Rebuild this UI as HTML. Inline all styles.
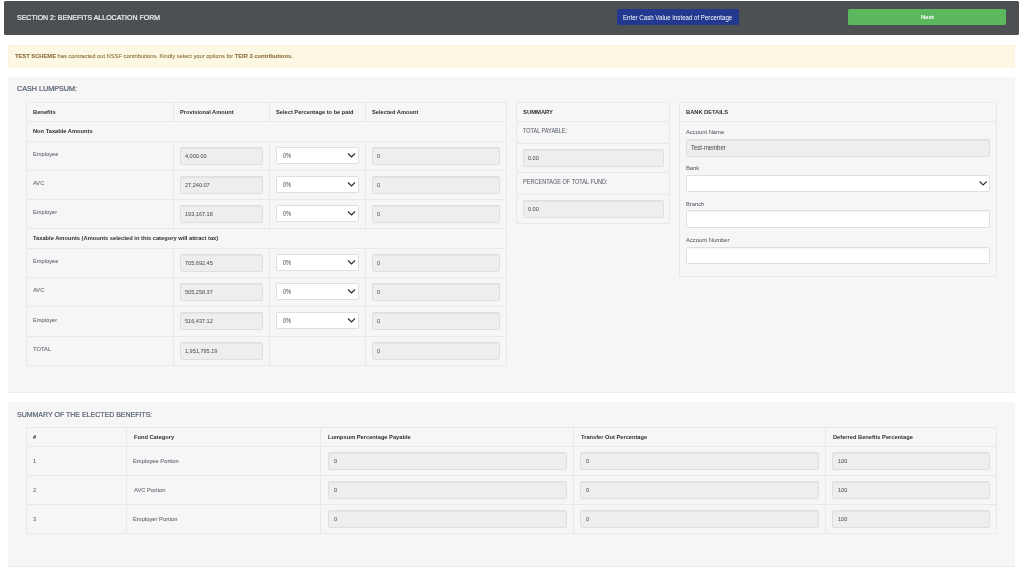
<!DOCTYPE html>
<html><head><meta charset="utf-8"><title>Benefits Allocation Form</title>
<style>
html,body{margin:0;padding:0;background:#fff;width:1024px;height:567px;overflow:hidden;}
#pg{position:absolute;left:0;top:0;width:1024px;height:567px;will-change:transform;font-family:"Liberation Sans",sans-serif;}
#pg div{position:absolute;}
.t{white-space:nowrap;line-height:10px;}
svg{display:block;}
</style></head><body><div id="pg">
<div style="left:4.00px;top:1.00px;width:1015.00px;height:34.00px;background:#4d5053;border-radius:1.5px;"></div>
<div class="t" style="left:16.82px;top:13.03px;font-size:8.0px;font-weight:normal;color:#f4f4f4;transform:scaleX(0.8756);transform-origin:0 0;-webkit-text-stroke:0.22px #f4f4f4;">SECTION 2: BENEFITS ALLOCATION FORM</div>
<div style="left:617.00px;top:9.20px;width:121.80px;height:16.10px;background:#22398f;border-radius:1.5px;"></div>
<div class="t" style="left:622.91px;top:12.85px;font-size:6.5px;font-weight:normal;color:#ffffff;transform:scaleX(0.9425);transform-origin:0 0;">Enter Cash Value Instead of Percentage</div>
<div style="left:848.40px;top:9.10px;width:157.60px;height:16.30px;background:#5cb85c;border-radius:1.5px;"></div>
<div class="t" style="left:920.54px;top:11.95px;font-size:6.2px;font-weight:bold;color:#ffffff;transform:scaleX(0.9733);transform-origin:0 0;">Next</div>
<div style="left:8.00px;top:45.00px;width:1007.00px;height:22.60px;background:#fcf8e3;border:1px solid #faf4de;box-sizing:border-box;border-radius:0.5px;"></div>
<div class="t" style="left:14.94px;top:51.15px;font-size:6.2px;font-weight:normal;color:#8a6d3b;transform:scaleX(0.9314);transform-origin:0 0;-webkit-text-stroke:0.08px #8a6d3b;"><b>TEST SCHEME</b> has contracted out NSSF contributions. Kindly select your options for <b>TEIR 3 contributions.</b></div>
<div style="left:8.00px;top:77.00px;width:1007.00px;height:315.50px;background:#f6f6f6;border-bottom:1px solid #ededed;box-sizing:border-box;"></div>
<div class="t" style="left:16.74px;top:84.20px;font-size:7.8px;font-weight:normal;color:#566070;transform:scaleX(0.9228);transform-origin:0 0;-webkit-text-stroke:0.22px #566070;">CASH LUMPSUM:</div>
<div style="left:26.00px;top:102.00px;width:481.00px;height:264.00px;border:1px solid #e9e9e9;box-sizing:border-box;"></div>
<div style="left:26.00px;top:121.00px;width:481.00px;height:1.00px;background:#e9e9e9;"></div>
<div style="left:26.00px;top:141.00px;width:481.00px;height:1.00px;background:#e9e9e9;"></div>
<div style="left:26.00px;top:170.00px;width:481.00px;height:1.00px;background:#e9e9e9;"></div>
<div style="left:26.00px;top:199.00px;width:481.00px;height:1.00px;background:#e9e9e9;"></div>
<div style="left:26.00px;top:228.00px;width:481.00px;height:1.00px;background:#e9e9e9;"></div>
<div style="left:26.00px;top:248.00px;width:481.00px;height:1.00px;background:#e9e9e9;"></div>
<div style="left:26.00px;top:277.00px;width:481.00px;height:1.00px;background:#e9e9e9;"></div>
<div style="left:26.00px;top:306.00px;width:481.00px;height:1.00px;background:#e9e9e9;"></div>
<div style="left:26.00px;top:336.00px;width:481.00px;height:1.00px;background:#e9e9e9;"></div>
<div style="left:173.00px;top:102.00px;width:1.00px;height:19.50px;background:#e9e9e9;"></div>
<div style="left:269.00px;top:102.00px;width:1.00px;height:19.50px;background:#e9e9e9;"></div>
<div style="left:365.00px;top:102.00px;width:1.00px;height:19.50px;background:#e9e9e9;"></div>
<div style="left:173.00px;top:141.50px;width:1.00px;height:87.00px;background:#e9e9e9;"></div>
<div style="left:269.00px;top:141.50px;width:1.00px;height:87.00px;background:#e9e9e9;"></div>
<div style="left:365.00px;top:141.50px;width:1.00px;height:87.00px;background:#e9e9e9;"></div>
<div style="left:173.00px;top:248.50px;width:1.00px;height:117.50px;background:#e9e9e9;"></div>
<div style="left:269.00px;top:248.50px;width:1.00px;height:117.50px;background:#e9e9e9;"></div>
<div style="left:365.00px;top:248.50px;width:1.00px;height:117.50px;background:#e9e9e9;"></div>
<div class="t" style="left:32.65px;top:106.64px;font-size:6.1px;font-weight:bold;color:#2e2e2e;transform:scaleX(0.9455);transform-origin:0 0;">Benefits</div>
<div class="t" style="left:179.66px;top:106.64px;font-size:6.1px;font-weight:bold;color:#2e2e2e;transform:scaleX(0.9350);transform-origin:0 0;">Provisional Amount</div>
<div class="t" style="left:276.19px;top:106.64px;font-size:6.1px;font-weight:bold;color:#2e2e2e;transform:scaleX(0.9350);transform-origin:0 0;">Select Percentage to be paid</div>
<div class="t" style="left:371.89px;top:106.64px;font-size:6.1px;font-weight:bold;color:#2e2e2e;transform:scaleX(0.9350);transform-origin:0 0;">Selected Amount</div>
<div class="t" style="left:32.66px;top:126.19px;font-size:6.1px;font-weight:bold;color:#2e2e2e;transform:scaleX(0.9360);transform-origin:0 0;">Non Taxable Amounts</div>
<div class="t" style="left:32.94px;top:233.19px;font-size:6.1px;font-weight:bold;color:#2e2e2e;transform:scaleX(0.9381);transform-origin:0 0;">Taxable Amounts (Amounts selected in this category will attract tax)</div>
<div class="t" style="left:32.54px;top:148.85px;font-size:6.2px;font-weight:normal;color:#58606c;transform:scaleX(0.9200);transform-origin:0 0;-webkit-text-stroke:0.04px #58606c;">Employee</div>
<div style="left:180.00px;top:147.00px;width:82.80px;height:17.70px;background:#eeeeee;border:1px solid #dfdfdf;box-sizing:border-box;border-radius:1.5px;box-shadow:inset 0 1px 1px rgba(0,0,0,.04);"></div>
<div class="t" style="left:184.89px;top:150.74px;font-size:6.1px;font-weight:normal;color:#4d4d4d;transform:scaleX(0.9100);transform-origin:0 0;-webkit-text-stroke:0.03px #4d4d4d;">4,000.00</div>
<div style="left:276.00px;top:147.10px;width:83.00px;height:16.60px;background:#fff;border:1px solid #dfdfdf;box-sizing:border-box;border-radius:1.5px;"></div>
<div class="t" style="left:282.63px;top:150.92px;font-size:6.3px;font-weight:normal;color:#4d4d4d;transform:scaleX(0.8800);transform-origin:0 0;-webkit-text-stroke:0.03px #4d4d4d;">0%</div>
<svg style="position:absolute;left:346px;top:151px" width="12" height="8"><path d="M2.00 2.50 L5.50 5.90 L9.00 2.50" fill="none" stroke="#2a2a2a" stroke-width="1.1" stroke-linecap="butt"/></svg>
<div style="left:372.00px;top:147.00px;width:128.00px;height:17.70px;background:#eeeeee;border:1px solid #dfdfdf;box-sizing:border-box;border-radius:1.5px;box-shadow:inset 0 1px 1px rgba(0,0,0,.04);"></div>
<div class="t" style="left:376.83px;top:150.74px;font-size:6.1px;font-weight:normal;color:#4d4d4d;transform:scaleX(0.9100);transform-origin:0 0;-webkit-text-stroke:0.03px #4d4d4d;">0</div>
<div class="t" style="left:33.00px;top:177.85px;font-size:6.2px;font-weight:normal;color:#58606c;transform:scaleX(0.9200);transform-origin:0 0;-webkit-text-stroke:0.04px #58606c;">AVC</div>
<div style="left:180.00px;top:176.00px;width:82.80px;height:17.70px;background:#eeeeee;border:1px solid #dfdfdf;box-sizing:border-box;border-radius:1.5px;box-shadow:inset 0 1px 1px rgba(0,0,0,.04);"></div>
<div class="t" style="left:184.72px;top:179.74px;font-size:6.1px;font-weight:normal;color:#4d4d4d;transform:scaleX(0.9100);transform-origin:0 0;-webkit-text-stroke:0.03px #4d4d4d;">27,240.07</div>
<div style="left:276.00px;top:176.10px;width:83.00px;height:16.60px;background:#fff;border:1px solid #dfdfdf;box-sizing:border-box;border-radius:1.5px;"></div>
<div class="t" style="left:282.63px;top:179.92px;font-size:6.3px;font-weight:normal;color:#4d4d4d;transform:scaleX(0.8800);transform-origin:0 0;-webkit-text-stroke:0.03px #4d4d4d;">0%</div>
<svg style="position:absolute;left:346px;top:180px" width="12" height="8"><path d="M2.00 2.50 L5.50 5.90 L9.00 2.50" fill="none" stroke="#2a2a2a" stroke-width="1.1" stroke-linecap="butt"/></svg>
<div style="left:372.00px;top:176.00px;width:128.00px;height:17.70px;background:#eeeeee;border:1px solid #dfdfdf;box-sizing:border-box;border-radius:1.5px;box-shadow:inset 0 1px 1px rgba(0,0,0,.04);"></div>
<div class="t" style="left:376.83px;top:179.74px;font-size:6.1px;font-weight:normal;color:#4d4d4d;transform:scaleX(0.9100);transform-origin:0 0;-webkit-text-stroke:0.03px #4d4d4d;">0</div>
<div class="t" style="left:32.54px;top:206.85px;font-size:6.2px;font-weight:normal;color:#58606c;transform:scaleX(0.9200);transform-origin:0 0;-webkit-text-stroke:0.04px #58606c;">Employer</div>
<div style="left:180.00px;top:205.00px;width:82.80px;height:17.70px;background:#eeeeee;border:1px solid #dfdfdf;box-sizing:border-box;border-radius:1.5px;box-shadow:inset 0 1px 1px rgba(0,0,0,.04);"></div>
<div class="t" style="left:184.61px;top:208.74px;font-size:6.1px;font-weight:normal;color:#4d4d4d;transform:scaleX(0.9100);transform-origin:0 0;-webkit-text-stroke:0.03px #4d4d4d;">193,167.18</div>
<div style="left:276.00px;top:205.10px;width:83.00px;height:16.60px;background:#fff;border:1px solid #dfdfdf;box-sizing:border-box;border-radius:1.5px;"></div>
<div class="t" style="left:282.63px;top:208.92px;font-size:6.3px;font-weight:normal;color:#4d4d4d;transform:scaleX(0.8800);transform-origin:0 0;-webkit-text-stroke:0.03px #4d4d4d;">0%</div>
<svg style="position:absolute;left:346px;top:209px" width="12" height="8"><path d="M2.00 2.50 L5.50 5.90 L9.00 2.50" fill="none" stroke="#2a2a2a" stroke-width="1.1" stroke-linecap="butt"/></svg>
<div style="left:372.00px;top:205.00px;width:128.00px;height:17.70px;background:#eeeeee;border:1px solid #dfdfdf;box-sizing:border-box;border-radius:1.5px;box-shadow:inset 0 1px 1px rgba(0,0,0,.04);"></div>
<div class="t" style="left:376.83px;top:208.74px;font-size:6.1px;font-weight:normal;color:#4d4d4d;transform:scaleX(0.9100);transform-origin:0 0;-webkit-text-stroke:0.03px #4d4d4d;">0</div>
<div class="t" style="left:32.54px;top:255.85px;font-size:6.2px;font-weight:normal;color:#58606c;transform:scaleX(0.9200);transform-origin:0 0;-webkit-text-stroke:0.04px #58606c;">Employee</div>
<div style="left:180.00px;top:254.00px;width:82.80px;height:17.70px;background:#eeeeee;border:1px solid #dfdfdf;box-sizing:border-box;border-radius:1.5px;box-shadow:inset 0 1px 1px rgba(0,0,0,.04);"></div>
<div class="t" style="left:184.72px;top:257.74px;font-size:6.1px;font-weight:normal;color:#4d4d4d;transform:scaleX(0.9100);transform-origin:0 0;-webkit-text-stroke:0.03px #4d4d4d;">705,692.45</div>
<div style="left:276.00px;top:254.10px;width:83.00px;height:16.60px;background:#fff;border:1px solid #dfdfdf;box-sizing:border-box;border-radius:1.5px;"></div>
<div class="t" style="left:282.63px;top:257.92px;font-size:6.3px;font-weight:normal;color:#4d4d4d;transform:scaleX(0.8800);transform-origin:0 0;-webkit-text-stroke:0.03px #4d4d4d;">0%</div>
<svg style="position:absolute;left:346px;top:258px" width="12" height="8"><path d="M2.00 2.50 L5.50 5.90 L9.00 2.50" fill="none" stroke="#2a2a2a" stroke-width="1.1" stroke-linecap="butt"/></svg>
<div style="left:372.00px;top:254.00px;width:128.00px;height:17.70px;background:#eeeeee;border:1px solid #dfdfdf;box-sizing:border-box;border-radius:1.5px;box-shadow:inset 0 1px 1px rgba(0,0,0,.04);"></div>
<div class="t" style="left:376.83px;top:257.74px;font-size:6.1px;font-weight:normal;color:#4d4d4d;transform:scaleX(0.9100);transform-origin:0 0;-webkit-text-stroke:0.03px #4d4d4d;">0</div>
<div class="t" style="left:33.00px;top:284.85px;font-size:6.2px;font-weight:normal;color:#58606c;transform:scaleX(0.9200);transform-origin:0 0;-webkit-text-stroke:0.04px #58606c;">AVC</div>
<div style="left:180.00px;top:283.00px;width:82.80px;height:17.70px;background:#eeeeee;border:1px solid #dfdfdf;box-sizing:border-box;border-radius:1.5px;box-shadow:inset 0 1px 1px rgba(0,0,0,.04);"></div>
<div class="t" style="left:184.78px;top:286.74px;font-size:6.1px;font-weight:normal;color:#4d4d4d;transform:scaleX(0.9100);transform-origin:0 0;-webkit-text-stroke:0.03px #4d4d4d;">505,258.37</div>
<div style="left:276.00px;top:283.10px;width:83.00px;height:16.60px;background:#fff;border:1px solid #dfdfdf;box-sizing:border-box;border-radius:1.5px;"></div>
<div class="t" style="left:282.63px;top:286.92px;font-size:6.3px;font-weight:normal;color:#4d4d4d;transform:scaleX(0.8800);transform-origin:0 0;-webkit-text-stroke:0.03px #4d4d4d;">0%</div>
<svg style="position:absolute;left:346px;top:287px" width="12" height="8"><path d="M2.00 2.50 L5.50 5.90 L9.00 2.50" fill="none" stroke="#2a2a2a" stroke-width="1.1" stroke-linecap="butt"/></svg>
<div style="left:372.00px;top:283.00px;width:128.00px;height:17.70px;background:#eeeeee;border:1px solid #dfdfdf;box-sizing:border-box;border-radius:1.5px;box-shadow:inset 0 1px 1px rgba(0,0,0,.04);"></div>
<div class="t" style="left:376.83px;top:286.74px;font-size:6.1px;font-weight:normal;color:#4d4d4d;transform:scaleX(0.9100);transform-origin:0 0;-webkit-text-stroke:0.03px #4d4d4d;">0</div>
<div class="t" style="left:32.54px;top:314.75px;font-size:6.2px;font-weight:normal;color:#58606c;transform:scaleX(0.9200);transform-origin:0 0;-webkit-text-stroke:0.04px #58606c;">Employer</div>
<div style="left:180.00px;top:312.00px;width:82.80px;height:17.70px;background:#eeeeee;border:1px solid #dfdfdf;box-sizing:border-box;border-radius:1.5px;box-shadow:inset 0 1px 1px rgba(0,0,0,.04);"></div>
<div class="t" style="left:184.78px;top:315.74px;font-size:6.1px;font-weight:normal;color:#4d4d4d;transform:scaleX(0.9100);transform-origin:0 0;-webkit-text-stroke:0.03px #4d4d4d;">516,437.12</div>
<div style="left:276.00px;top:312.10px;width:83.00px;height:16.60px;background:#fff;border:1px solid #dfdfdf;box-sizing:border-box;border-radius:1.5px;"></div>
<div class="t" style="left:282.63px;top:315.92px;font-size:6.3px;font-weight:normal;color:#4d4d4d;transform:scaleX(0.8800);transform-origin:0 0;-webkit-text-stroke:0.03px #4d4d4d;">0%</div>
<svg style="position:absolute;left:346px;top:316px" width="12" height="8"><path d="M2.00 2.50 L5.50 5.90 L9.00 2.50" fill="none" stroke="#2a2a2a" stroke-width="1.1" stroke-linecap="butt"/></svg>
<div style="left:372.00px;top:312.00px;width:128.00px;height:17.70px;background:#eeeeee;border:1px solid #dfdfdf;box-sizing:border-box;border-radius:1.5px;box-shadow:inset 0 1px 1px rgba(0,0,0,.04);"></div>
<div class="t" style="left:376.83px;top:315.74px;font-size:6.1px;font-weight:normal;color:#4d4d4d;transform:scaleX(0.9100);transform-origin:0 0;-webkit-text-stroke:0.03px #4d4d4d;">0</div>
<div class="t" style="left:32.88px;top:343.85px;font-size:6.2px;font-weight:normal;color:#58606c;transform:scaleX(0.9400);transform-origin:0 0;-webkit-text-stroke:0.04px #58606c;">TOTAL</div>
<div style="left:180.00px;top:342.00px;width:82.80px;height:17.70px;background:#eeeeee;border:1px solid #dfdfdf;box-sizing:border-box;border-radius:1.5px;box-shadow:inset 0 1px 1px rgba(0,0,0,.04);"></div>
<div class="t" style="left:184.61px;top:345.74px;font-size:6.1px;font-weight:normal;color:#4d4d4d;transform:scaleX(0.9100);transform-origin:0 0;-webkit-text-stroke:0.03px #4d4d4d;">1,951,795.19</div>
<div style="left:372.00px;top:342.00px;width:128.00px;height:17.70px;background:#eeeeee;border:1px solid #dfdfdf;box-sizing:border-box;border-radius:1.5px;box-shadow:inset 0 1px 1px rgba(0,0,0,.04);"></div>
<div class="t" style="left:376.83px;top:345.74px;font-size:6.1px;font-weight:normal;color:#4d4d4d;transform:scaleX(0.9100);transform-origin:0 0;-webkit-text-stroke:0.03px #4d4d4d;">0</div>
<div style="left:516.00px;top:102.00px;width:154.00px;height:122.00px;border:1px solid #e9e9e9;box-sizing:border-box;"></div>
<div style="left:516.00px;top:121.00px;width:154.00px;height:1.00px;background:#e9e9e9;"></div>
<div style="left:516.00px;top:143.00px;width:154.00px;height:1.00px;background:#e9e9e9;"></div>
<div style="left:516.00px;top:172.00px;width:154.00px;height:1.00px;background:#e9e9e9;"></div>
<div style="left:516.00px;top:194.00px;width:154.00px;height:1.00px;background:#e9e9e9;"></div>
<div class="t" style="left:522.88px;top:106.59px;font-size:6.1px;font-weight:bold;color:#2e2e2e;transform:scaleX(0.9607);transform-origin:0 0;">SUMMARY</div>
<div class="t" style="left:522.89px;top:125.68px;font-size:6.4px;font-weight:normal;color:#58606c;transform:scaleX(0.8628);transform-origin:0 0;-webkit-text-stroke:0.04px #58606c;">TOTAL PAYABLE:</div>
<div style="left:523.00px;top:148.80px;width:140.60px;height:17.90px;background:#eeeeee;border:1px solid #dfdfdf;box-sizing:border-box;border-radius:1.5px;box-shadow:inset 0 1px 1px rgba(0,0,0,.04);"></div>
<div class="t" style="left:527.83px;top:152.64px;font-size:6.1px;font-weight:normal;color:#4d4d4d;transform:scaleX(0.9100);transform-origin:0 0;-webkit-text-stroke:0.03px #4d4d4d;">0.00</div>
<div class="t" style="left:522.55px;top:176.68px;font-size:6.4px;font-weight:normal;color:#58606c;transform:scaleX(0.8718);transform-origin:0 0;-webkit-text-stroke:0.04px #58606c;">PERCENTAGE OF TOTAL FUND:</div>
<div style="left:523.00px;top:200.00px;width:140.60px;height:17.60px;background:#eeeeee;border:1px solid #dfdfdf;box-sizing:border-box;border-radius:1.5px;box-shadow:inset 0 1px 1px rgba(0,0,0,.04);"></div>
<div class="t" style="left:527.83px;top:203.69px;font-size:6.1px;font-weight:normal;color:#4d4d4d;transform:scaleX(0.9100);transform-origin:0 0;-webkit-text-stroke:0.03px #4d4d4d;">0.00</div>
<div style="left:679.00px;top:102.00px;width:318.00px;height:174.50px;border:1px solid #e9e9e9;box-sizing:border-box;"></div>
<div style="left:679.00px;top:121.00px;width:318.00px;height:1.00px;background:#e9e9e9;"></div>
<div class="t" style="left:686.06px;top:106.59px;font-size:6.1px;font-weight:bold;color:#2e2e2e;transform:scaleX(0.9377);transform-origin:0 0;">BANK DETAILS</div>
<div class="t" style="left:686.20px;top:126.89px;font-size:6.1px;font-weight:normal;color:#58606c;transform:scaleX(0.9551);transform-origin:0 0;-webkit-text-stroke:0.04px #58606c;">Account Name</div>
<div style="left:686.10px;top:139.00px;width:303.90px;height:17.70px;background:#eeeeee;border:1px solid #dfdfdf;box-sizing:border-box;border-radius:1.5px;box-shadow:inset 0 1px 1px rgba(0,0,0,.04);"></div>
<div class="t" style="left:690.98px;top:142.63px;font-size:6.4px;font-weight:normal;color:#4d4d4d;transform:scaleX(0.9300);transform-origin:0 0;-webkit-text-stroke:0.03px #4d4d4d;">Test-member</div>
<div class="t" style="left:685.74px;top:162.89px;font-size:6.1px;font-weight:normal;color:#58606c;transform:scaleX(0.9500);transform-origin:0 0;-webkit-text-stroke:0.04px #58606c;">Bank</div>
<div style="left:686.00px;top:175.20px;width:304.00px;height:16.40px;background:#fff;border:1px solid #dfdfdf;box-sizing:border-box;border-radius:1.5px;"></div>
<svg style="position:absolute;left:977px;top:179px" width="12" height="8"><path d="M2.60 2.50 L6.10 5.90 L9.60 2.50" fill="none" stroke="#2a2a2a" stroke-width="1.1" stroke-linecap="butt"/></svg>
<div class="t" style="left:685.74px;top:198.69px;font-size:6.1px;font-weight:normal;color:#58606c;transform:scaleX(0.9500);transform-origin:0 0;-webkit-text-stroke:0.04px #58606c;">Branch</div>
<div style="left:686.10px;top:210.40px;width:303.90px;height:17.20px;background:#fff;border:1px solid #dfdfdf;box-sizing:border-box;border-radius:1.5px;box-shadow:inset 0 1px 1px rgba(0,0,0,.04);"></div>
<div class="t" style="left:686.20px;top:234.59px;font-size:6.1px;font-weight:normal;color:#58606c;transform:scaleX(0.9570);transform-origin:0 0;-webkit-text-stroke:0.04px #58606c;">Account Number</div>
<div style="left:686.10px;top:246.60px;width:303.90px;height:17.20px;background:#fff;border:1px solid #dfdfdf;box-sizing:border-box;border-radius:1.5px;box-shadow:inset 0 1px 1px rgba(0,0,0,.04);"></div>
<div style="left:8.00px;top:402.20px;width:1007.00px;height:164.40px;background:#f6f6f6;border-bottom:1px solid #e9e9e9;box-sizing:border-box;"></div>
<div class="t" style="left:16.82px;top:410.10px;font-size:7.8px;font-weight:normal;color:#566070;transform:scaleX(0.8973);transform-origin:0 0;-webkit-text-stroke:0.2px #566070;">SUMMARY OF THE ELECTED BENEFITS:</div>
<div style="left:26.00px;top:427.00px;width:971.00px;height:107.00px;border:1px solid #e9e9e9;box-sizing:border-box;"></div>
<div style="left:26.00px;top:446.00px;width:971.00px;height:1.00px;background:#e9e9e9;"></div>
<div style="left:26.00px;top:475.00px;width:971.00px;height:1.00px;background:#e9e9e9;"></div>
<div style="left:26.00px;top:504.00px;width:971.00px;height:1.00px;background:#e9e9e9;"></div>
<div style="left:126.00px;top:427.00px;width:1.00px;height:107.00px;background:#e9e9e9;"></div>
<div style="left:320.00px;top:427.00px;width:1.00px;height:107.00px;background:#e9e9e9;"></div>
<div style="left:573.00px;top:427.00px;width:1.00px;height:107.00px;background:#e9e9e9;"></div>
<div style="left:825.00px;top:427.00px;width:1.00px;height:107.00px;background:#e9e9e9;"></div>
<div class="t" style="left:32.94px;top:431.69px;font-size:6.1px;font-weight:bold;color:#2e2e2e;transform:scaleX(0.9350);transform-origin:0 0;">#</div>
<div class="t" style="left:133.96px;top:431.69px;font-size:6.1px;font-weight:bold;color:#2e2e2e;transform:scaleX(0.9350);transform-origin:0 0;">Fund Category</div>
<div class="t" style="left:327.96px;top:431.69px;font-size:6.1px;font-weight:bold;color:#2e2e2e;transform:scaleX(0.9350);transform-origin:0 0;">Lumpsum Percentage Payable</div>
<div class="t" style="left:581.24px;top:431.69px;font-size:6.1px;font-weight:bold;color:#2e2e2e;transform:scaleX(0.9350);transform-origin:0 0;">Transfer Out Percentage</div>
<div class="t" style="left:832.96px;top:431.69px;font-size:6.1px;font-weight:bold;color:#2e2e2e;transform:scaleX(0.9350);transform-origin:0 0;">Deferred Benefits Percentage</div>
<div class="t" style="left:32.59px;top:455.99px;font-size:6.1px;font-weight:normal;color:#58606c;transform:scaleX(0.9500);transform-origin:0 0;-webkit-text-stroke:0.04px #58606c;">1</div>
<div class="t" style="left:133.44px;top:455.99px;font-size:6.1px;font-weight:normal;color:#58606c;transform:scaleX(0.9500);transform-origin:0 0;-webkit-text-stroke:0.04px #58606c;">Employee Portion</div>
<div style="left:327.50px;top:452.40px;width:239.30px;height:17.60px;background:#eeeeee;border:1px solid #dfdfdf;box-sizing:border-box;border-radius:1.5px;box-shadow:inset 0 1px 1px rgba(0,0,0,.04);"></div>
<div class="t" style="left:333.53px;top:456.12px;font-size:6.0px;font-weight:normal;color:#4d4d4d;transform:scaleX(0.9200);transform-origin:0 0;-webkit-text-stroke:0.03px #4d4d4d;">0</div>
<div style="left:580.00px;top:452.40px;width:238.70px;height:17.60px;background:#eeeeee;border:1px solid #dfdfdf;box-sizing:border-box;border-radius:1.5px;box-shadow:inset 0 1px 1px rgba(0,0,0,.04);"></div>
<div class="t" style="left:586.03px;top:456.12px;font-size:6.0px;font-weight:normal;color:#4d4d4d;transform:scaleX(0.9200);transform-origin:0 0;-webkit-text-stroke:0.03px #4d4d4d;">0</div>
<div style="left:832.00px;top:452.40px;width:158.00px;height:17.60px;background:#eeeeee;border:1px solid #dfdfdf;box-sizing:border-box;border-radius:1.5px;box-shadow:inset 0 1px 1px rgba(0,0,0,.04);"></div>
<div class="t" style="left:837.81px;top:456.12px;font-size:6.0px;font-weight:normal;color:#4d4d4d;transform:scaleX(0.9200);transform-origin:0 0;-webkit-text-stroke:0.03px #4d4d4d;">100</div>
<div class="t" style="left:32.71px;top:484.99px;font-size:6.1px;font-weight:normal;color:#58606c;transform:scaleX(0.9500);transform-origin:0 0;-webkit-text-stroke:0.04px #58606c;">2</div>
<div class="t" style="left:133.90px;top:484.99px;font-size:6.1px;font-weight:normal;color:#58606c;transform:scaleX(0.9500);transform-origin:0 0;-webkit-text-stroke:0.04px #58606c;">AVC Portion</div>
<div style="left:327.50px;top:481.40px;width:239.30px;height:17.60px;background:#eeeeee;border:1px solid #dfdfdf;box-sizing:border-box;border-radius:1.5px;box-shadow:inset 0 1px 1px rgba(0,0,0,.04);"></div>
<div class="t" style="left:333.53px;top:485.12px;font-size:6.0px;font-weight:normal;color:#4d4d4d;transform:scaleX(0.9200);transform-origin:0 0;-webkit-text-stroke:0.03px #4d4d4d;">0</div>
<div style="left:580.00px;top:481.40px;width:238.70px;height:17.60px;background:#eeeeee;border:1px solid #dfdfdf;box-sizing:border-box;border-radius:1.5px;box-shadow:inset 0 1px 1px rgba(0,0,0,.04);"></div>
<div class="t" style="left:586.03px;top:485.12px;font-size:6.0px;font-weight:normal;color:#4d4d4d;transform:scaleX(0.9200);transform-origin:0 0;-webkit-text-stroke:0.03px #4d4d4d;">0</div>
<div style="left:832.00px;top:481.40px;width:158.00px;height:17.60px;background:#eeeeee;border:1px solid #dfdfdf;box-sizing:border-box;border-radius:1.5px;box-shadow:inset 0 1px 1px rgba(0,0,0,.04);"></div>
<div class="t" style="left:837.81px;top:485.12px;font-size:6.0px;font-weight:normal;color:#4d4d4d;transform:scaleX(0.9200);transform-origin:0 0;-webkit-text-stroke:0.03px #4d4d4d;">100</div>
<div class="t" style="left:32.83px;top:513.99px;font-size:6.1px;font-weight:normal;color:#58606c;transform:scaleX(0.9500);transform-origin:0 0;-webkit-text-stroke:0.04px #58606c;">3</div>
<div class="t" style="left:133.44px;top:513.99px;font-size:6.1px;font-weight:normal;color:#58606c;transform:scaleX(0.9500);transform-origin:0 0;-webkit-text-stroke:0.04px #58606c;">Employer Portion</div>
<div style="left:327.50px;top:510.40px;width:239.30px;height:17.60px;background:#eeeeee;border:1px solid #dfdfdf;box-sizing:border-box;border-radius:1.5px;box-shadow:inset 0 1px 1px rgba(0,0,0,.04);"></div>
<div class="t" style="left:333.53px;top:514.12px;font-size:6.0px;font-weight:normal;color:#4d4d4d;transform:scaleX(0.9200);transform-origin:0 0;-webkit-text-stroke:0.03px #4d4d4d;">0</div>
<div style="left:580.00px;top:510.40px;width:238.70px;height:17.60px;background:#eeeeee;border:1px solid #dfdfdf;box-sizing:border-box;border-radius:1.5px;box-shadow:inset 0 1px 1px rgba(0,0,0,.04);"></div>
<div class="t" style="left:586.03px;top:514.12px;font-size:6.0px;font-weight:normal;color:#4d4d4d;transform:scaleX(0.9200);transform-origin:0 0;-webkit-text-stroke:0.03px #4d4d4d;">0</div>
<div style="left:832.00px;top:510.40px;width:158.00px;height:17.60px;background:#eeeeee;border:1px solid #dfdfdf;box-sizing:border-box;border-radius:1.5px;box-shadow:inset 0 1px 1px rgba(0,0,0,.04);"></div>
<div class="t" style="left:837.81px;top:514.12px;font-size:6.0px;font-weight:normal;color:#4d4d4d;transform:scaleX(0.9200);transform-origin:0 0;-webkit-text-stroke:0.03px #4d4d4d;">100</div>
</div></body></html>
